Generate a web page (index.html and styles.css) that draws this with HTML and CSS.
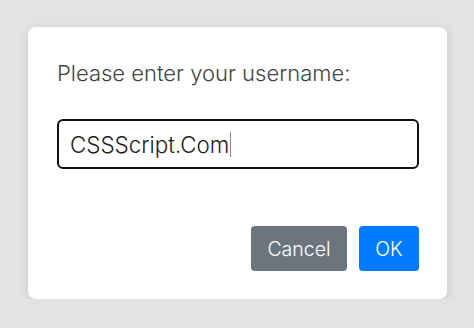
FILE: index.html
```html
<!DOCTYPE html>
<html lang="en">
<head>
  <meta charset="UTF-8" />
  <meta name="viewport" content="width=device-width, initial-scale=1.0" />
  <title>Prompt</title>
  <link rel="stylesheet" href="styles.css">
</head>
<body>
  <div class="dialog">
    <p class="dialog-label">Please enter your username:</p>
    <div class="dialog-input">CSSScript.Com<span class="caret"></span></div>
    <div class="dialog-actions">
      <button class="btn btn-cancel">Cancel</button>
      <button class="btn btn-ok">OK</button>
    </div>
  </div>
</body>
</html>
```

FILE: styles.css
```css
body { font-family: Inter, "Noto Sans", sans-serif; background-color: #e3e3e1; margin: 0; padding: 27px 27px 0 28px; }
.dialog { background-color: #fff; border-radius: 8px; box-shadow: 0 2px 10px rgba(0,0,0,0.12); width: 419px; height: 272px; box-sizing: border-box; padding: 30px 28px 0 29px; }
.dialog-label { margin: 0; font-size: 22px; font-weight: 300; color: #444; line-height: 32px; }
.dialog-input { margin-top: 30px; height: 50px; box-sizing: border-box; border: 2px solid #111; border-radius: 6px; padding: 0 11px; display: flex; align-items: center; font-size: 22.4px; font-weight: 300; color: #222; }
.caret { display: inline-block; width: 1px; height: 25px; background-color: #888; margin-left: 1px; }
.dialog-actions { display: flex; justify-content: flex-end; gap: 12px; margin-top: 57px; }
.btn { font-family: inherit; font-size: 19.5px; font-weight: 300; color: #fff; border: none; border-radius: 4px; height: 45px; padding: 0 12px; cursor: pointer; }
.btn-cancel { background-color: #6c757d; width: 96px; }
.btn-ok { background-color: #007bff; width: 60px; }
```
